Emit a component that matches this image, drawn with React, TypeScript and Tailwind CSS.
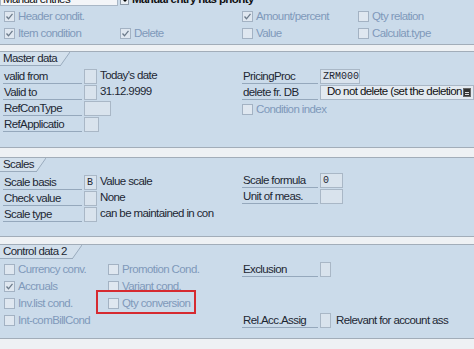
import React from 'react';

const font = "font-['Liberation_Sans',Arial,sans-serif] text-[11.5px] tracking-[-0.6px]";

const Check = ({ checked = false }: { checked?: boolean }) => (
  <span className="w-[11px] h-[11px] shrink-0 border border-[#a3b2c3] bg-[#dfe7f0] flex items-center justify-center">
    {checked && (
      <svg width="9" height="9" viewBox="0 0 9 9">
        <path d="M1.5 4.5 L3.5 6.8 L7.5 1.8" fill="none" stroke="#6c7b8b" strokeWidth="1.3" />
      </svg>
    )}
  </span>
);

const CheckItem = ({ label, checked, className = '' }: any) => (
  <div className={`flex items-center gap-[3px] h-[17px] ${className}`}>
    <Check checked={checked} />
    <span className="text-[#7f99ba] whitespace-nowrap">{label}</span>
  </div>
);

const Label = ({ children, w = 'w-[79px]' }: any) => (
  <div className={`${w} h-[15px] border-b border-[#95a8bc] text-[#1d2733] pl-[1px] leading-[14px] whitespace-nowrap shrink-0`}>{children}</div>
);

const Field = ({ w, value = '', mono = false }: any) => (
  <div className={`${w} h-[15px] border border-[#a9b7c6] bg-[#d9e3ed] shrink-0 leading-[13px] px-[2px] text-[#1d2733] ${mono ? "font-['Liberation_Mono',monospace] text-[10px] tracking-normal" : ''}`}>{value}</div>
);

const Tab = ({ title, w }: { title: string; w: string }) => (
  <div className="flex h-[14px]">
    <div className={`${w} bg-[#d3e0ec] border-b border-[#9aabbd] pl-[3px] leading-[13px] text-[#1d2733] whitespace-nowrap`}>{title}</div>
    <svg width="10" height="14" viewBox="0 0 10 14" className="shrink-0">
      <path d="M0 0 L10 0 L0 14 Z" fill="#d3e0ec" />
      <path d="M10 0 L0.5 13.5" stroke="#9aabbd" strokeWidth="1" />
      <path d="M0 13.5 L1 13.5" stroke="#9aabbd" strokeWidth="1" />
    </svg>
  </div>
);

const Row = ({ children }: any) => <div className="flex items-center h-4 gap-[2px]">{children}</div>;

export default function App() {
  return (
    <div className={`w-[474px] h-[349px] overflow-hidden bg-[#eef1f4] ${font}`}>
      {/* panel 1 */}
      <div className="h-[53px] bg-[#cbdbea] border-b border-[#a2adb9] relative">
        <div className="flex items-center h-[14px] mt-[-8px]">
          <div className="w-[118px] h-[14px] bg-[#f3f5f8] border border-[#a9b7c6] pl-[2px] text-[#111] leading-[12px]">Manual entries</div>
          <div className="w-[9px] h-[12px] ml-[2px] bg-[#e9eef3] border border-[#8d9aa8] flex items-end justify-center">
            <span className="w-0 h-0 border-l-[3px] border-r-[3px] border-t-[3px] border-l-transparent border-r-transparent border-t-black mb-[2px]" />
          </div>
          <span className="ml-[3px] text-[#111] font-bold leading-[12px]">Manual entry has priority</span>
        </div>
        <div className="grid grid-cols-[116px_122px_116px_1fr] pl-[4px] pt-[2px]">
          <CheckItem label="Header condit." checked />
          <div />
          <CheckItem label="Amount/percent" checked />
          <CheckItem label="Qty relation" />
          <CheckItem label="Item condition" checked />
          <CheckItem label="Delete" checked />
          <CheckItem label="Value" />
          <CheckItem label="Calculat.type" />
        </div>
      </div>

      {/* Master data */}
      <div className="mt-[6px] h-[97px] bg-[#cbdbea] border-t border-b border-[#a2adb9]">
        <Tab title="Master data" w="w-[60px]" />
        <div className="flex pt-[2px] pl-[3px]">
          <div className="w-[239px] flex flex-col">
            <Row><Label>valid from</Label><Field w="w-[13px]" /><span className="pl-[1px] text-[#1d2733]">Today's date</span></Row>
            <Row><Label>Valid to</Label><Field w="w-[13px]" /><span className="pl-[1px] text-[#1d2733]">31.12.9999</span></Row>
            <Row><Label>RefConType</Label><Field w="w-[27px]" /></Row>
            <Row><Label>RefApplicatio</Label><Field w="w-[15px]" /></Row>
          </div>
          <div className="flex-1 flex flex-col">
            <Row><Label w="w-[76px]">PricingProc</Label><Field w="w-[40px]" value="ZRM000" mono /></Row>
            <Row>
              <Label w="w-[76px]">delete fr. DB</Label>
              <div className="flex-1 h-[15px] border border-[#a9b7c6] bg-[#e3eaf1] flex items-center pl-[6px] text-[#111] whitespace-nowrap overflow-hidden">
                <span className="flex-1">Do not delete (set the deletion</span>
                <span className="w-[8px] h-[9px] bg-[#333] border border-[#666] mr-[2px] flex flex-col justify-end p-[1px] gap-[1px]">
                  <span className="h-[1px] bg-[#ddd]" /><span className="h-[1px] bg-[#ddd]" />
                </span>
              </div>
            </Row>
            <div className="pt-[1px]"><CheckItem label="Condition index" /></div>
          </div>
        </div>
      </div>

      {/* Scales */}
      <div className="mt-[9px] h-[80px] bg-[#cbdbea] border-t border-b border-[#a2adb9]">
        <Tab title="Scales" w="w-[36px]" />
        <div className="flex pt-[2px] pl-[3px]">
          <div className="w-[239px] flex flex-col">
            <Row><Label>Scale basis</Label><Field w="w-[13px]" value="B" mono /><span className="pl-[1px] text-[#1d2733]">Value scale</span></Row>
            <Row><Label>Check value</Label><Field w="w-[13px]" /><span className="pl-[1px] text-[#1d2733]">None</span></Row>
            <Row><Label>Scale type</Label><Field w="w-[13px]" /><span className="pl-[1px] text-[#1d2733]">can be maintained in con</span></Row>
          </div>
          <div className="flex-1 flex flex-col mt-[-2px]">
            <Row><Label w="w-[76px]">Scale formula</Label><Field w="w-[23px]" value="0" mono /></Row>
            <Row><Label w="w-[76px]">Unit of meas.</Label><Field w="w-[23px]" /></Row>
          </div>
        </div>
      </div>

      {/* Control data 2 */}
      <div className="mt-[7px] h-[95px] bg-[#cbdbea] border-t border-b border-[#a2adb9]">
        <Tab title="Control data 2" w="w-[72px]" />
        <div className="flex pt-[2px] pl-[4px]">
          <div className="w-[104px] flex flex-col">
            <CheckItem label="Currency conv." />
            <CheckItem label="Accruals" checked />
            <CheckItem label="Inv.list cond." />
            <CheckItem label="Int-comBillCond" />
          </div>
          <div className="w-[134px] flex flex-col relative">
            <CheckItem label="Promotion Cond." />
            <CheckItem label="Variant cond." />
            <CheckItem label="Qty conversion" />
            <div className="absolute left-[-12px] top-[29px] w-[100px] h-[24px] border-2 border-[#d62a30]" />
          </div>
          <div className="flex-1 flex flex-col">
            <div className="h-[17px] flex items-center gap-[2px]"><Label w="w-[76px]">Exclusion</Label><Field w="w-[11px]" /></div>
            <div className="h-[17px]" />
            <div className="h-[17px]" />
            <div className="h-[17px] flex items-center gap-[2px]"><Label w="w-[76px]">Rel.Acc.Assig</Label><Field w="w-[11px]" /><span className="pl-[3px] text-[#1d2733] whitespace-nowrap">Relevant for account ass</span></div>
          </div>
        </div>
      </div>
    </div>
  );
}
